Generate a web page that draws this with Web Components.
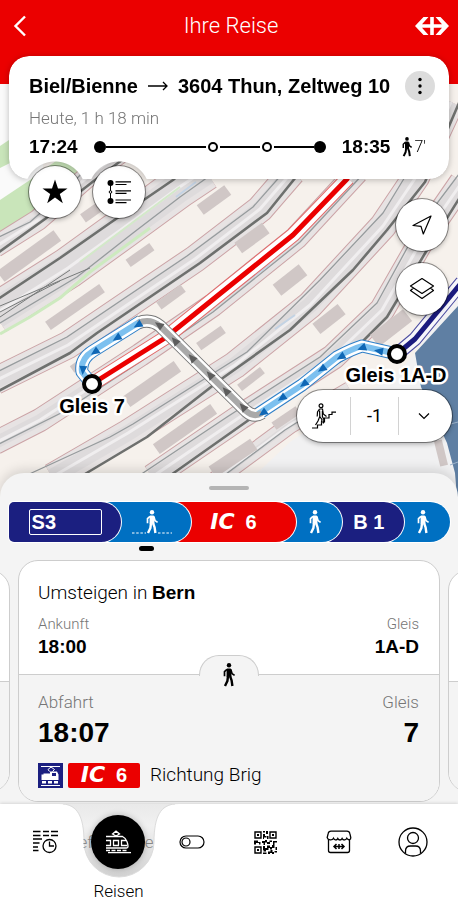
<!DOCTYPE html>
<html lang="de">
<head>
<meta charset="utf-8">
<meta name="viewport" content="width=device-width, initial-scale=1">
<title>Ihre Reise</title>
<style>
  body {
    margin: 0;
    background: #f4f4f4;
    color: #000;
    font-family: "Liberation Sans", Arial, sans-serif;
    --light-font: Roboto, "Liberation Sans", sans-serif;
    --red: #eb0000;
    --blue: #0070c2;
    --navy: #1b1f80;
    --grey: #767676;
    --panel: #f4f4f4;
    --line: #cdcdcd;
  }
</style>
</head>
<body>
<trip-screen></trip-screen>

<script>
const WALKER = `
  <circle cx="7" cy="2.3" r="2.2"/>
  <path d="M5 5.4h3.6l.8 1.4v7H4.6v-7z"/>
  <path fill="none" stroke="currentColor" stroke-width="1.7" stroke-linejoin="round" d="M5 6.3 2.5 8.6v4.6M8.8 6.6l1.2 4 2.6 1.8"/>
  <path fill="none" stroke="currentColor" stroke-width="2.4" stroke-linejoin="round" d="M6 13 5.4 18 3 23M8 13l1.6 4.4.8 5.6"/>`

const ICONS = {
  back: ['0 0 14 22', '<path fill="none" stroke="currentColor" stroke-width="2.4" d="M12 1.5 2.5 11 12 20.5"/>'],
  sbb: ['0 0 34 18', '<path d="M0 9 8.500 0h5L7 7.200h8.200V0h3.600v7.200H27L20.500 0h5L34 9l-8.500 9h-5l6.500-7.200h-8.200V18h-3.600v-7.200H7l6.500 7.200h-5z"/>'],
  arrow: ['0 0 20 10', '<path fill="none" stroke="currentColor" stroke-width="1.300" d="M0 5h19M15 1l4 4-4 4"/>'],
  dots: ['0 0 6 18', '<circle cx="3" cy="2.500" r="1.700"/><circle cx="3" cy="9" r="1.700"/><circle cx="3" cy="15.500" r="1.700"/>'],
  star: ['0 0 26 26', '<path d="m13 .5 3 9h9.500l-7.700 5.600 3 9.200-7.800-5.700-7.800 5.700 3-9.200L.5 9.500H10z"/>'],
  stops: ['0 0 24 24', `<g fill="none" stroke="currentColor"><path d="M3.500 3v18"/><path stroke-width="1.200" d="M8.500 1.800h16M8.500 4.500h11M8.500 10.800h16M8.500 13.300h11M8.500 20h16M8.500 22.600h11"/><circle cx="3.500" cy="12" r="1.300" fill="#fff"/></g><circle cx="3.500" cy="3" r="3"/><circle cx="3.500" cy="21" r="3"/>`],
  locate: ['0 0 20 20', '<path fill="none" stroke="currentColor" stroke-width="1.200" stroke-linejoin="round" d="M19 1 1 10.500l8 .8 2.300 7.700z"/>'],
  layers: ['0 0 26 24', '<path fill="none" stroke="currentColor" stroke-width="1.200" stroke-linejoin="round" d="M13 1.500 1.500 9 13 16.500 24.500 9zM4.500 11l-3 2.500L13 21.500l11.500-8-3-2.500"/>'],
  stairs: ['0 0 26 26', `<g fill="none" stroke="currentColor" stroke-width="1.200"><circle cx="10" cy="2.700" r="1.900"/><path d="M8.500 6h3l.8 5 3.200 2.500M8.500 6 6.500 9l-.3 4.500M8.600 7.500l.2 6L7 18l-2.500 4M11.400 8v5.500l1.500 3-.5 4M8.800 13.500l2.200 3.200-.6 2.600M1 25h5.500v-3h4v-3h3v-4h4.500v-3.500h3V9.200H25"/></g>`],
  down: ['0 0 12 8', '<path fill="none" stroke="currentColor" stroke-width="1.200" d="m1 1.500 5 5 5-5"/>'],
  walker: ['0 0 14 24', WALKER],
  platform: ['0 0 40 24', `<g transform="translate(13)">${WALKER}</g><path stroke="currentColor" stroke-width="1.200" stroke-dasharray="2.500 1.700" d="M0 23h14M26 23h14"/>`],
  train: ['0 0 25 25', `<path fill="#1b1f80" d="M0 0h25v25H0z"/><g stroke="#fff" fill="none"><path d="M3 3.500h19M10 6.500 13 4l3.500 2.500-2 2M10 6.500l1.500 2M3 22.500h19"/></g><path fill="#fff" d="M12 8.500h7l1.500 3V17h-17v-5.500h2v-1h6.500z"/><path fill="#1b1f80" d="M14 10h4v3h-4z"/><path fill="#fff" d="M4 18h4v2.500H4zM10 18h4v2.500h-4zM16 18h4v2.500h-4z"/>`],
  timetable: ['0 0 26 24', `<g fill="none" stroke="currentColor" stroke-width="1.300"><path d="M1 1.500h7.500M11 1.500h6M19 1.500h7M1 5.500h7.500M11 5.500h6M19 5.500h7M1 9h9M1 13h6.500M1 17h5M1 20.500h5.500"/><circle cx="17.500" cy="16" r="6.500"/><path d="M17.500 11.500V16h4.500"/></g>`],
  trips: ['0 0 26 24', `<g fill="none" stroke="currentColor" stroke-width="1.300"><path d="M1 6.500h16.500c4.500 2 5.500 8 5.500 10 0 1-.7 1.500-1.500 1.500H1"/><path d="M7.500 4 11 1.200 14.500 4 11 6z"/><path d="M1 10.500h4.500v5H1M8.500 10.500h5v5h-5zM21 10.500h-4.500v5h5.500"/><path stroke-dasharray="4 1.500" d="M1 20.500h22"/><path d="M3 22.600h23"/></g>`],
  toggle: ['0 0 26 14', '<g fill="none" stroke="currentColor" stroke-width="1.200"><rect x="1" y="1" width="24" height="12" rx="6"/><circle cx="7" cy="7" r="4"/></g>'],
  qr: ['0 0 23 23', `<g fill="none" stroke="currentColor" stroke-width="1.400"><path d="M1 1h6v6H1zM16 1h6v6h-6zM1 16h6v6H1z"/></g><path d="M3 3h2v2H3zM18 3h2v2h-2zM3 18h2v2H3zM9 0h2v1.500H9zM12 0h2v3h-2zM9 3h2v2h1.500v1.500H10V8H9zM13 5h1.500v3H13zM0 9.500h4V11h2.500v2.500H5V12H2v1.500H0zM8 10h3V9h2v2h2.500V9.500H18V11h-2v2h-3v-1.500h-2V14H9.500v-2H8zM19 10h4v1.500h-2.500V14H19zM9 15h2v2h2v-2.500h3V16h2v-2h2.500v3H18v1.500h-2V17h-1.500v2H12v1.500H9.500V19H9zM21.500 16H23v3h-1.500zM9 21.500h3.500V23H9zM14 20.500h2.500V19h2v2H20v2h-2v-1h-2v1h-2zM20.500 20H23v1.500h-2.500z"/>`],
  shop: ['0 0 26 24', `<g fill="none" stroke="currentColor" stroke-width="1.300"><path d="M5 1.200h16c1.500 0 2.500.8 2.800 2.200l1 4.200c.2 2.500-2.800 2.900-4 .7-1 2.200-3.700 2.200-4.700.2-1 2-3.300 2-4.300 0-1 2-3.300 2-4.300-.2-1 2.200-5.700 2.200-6.300-.7l1-4.200C2.500 2 3.500 1.200 5 1.200z"/><path d="M2.500 10v10.500c0 1.300.7 2 2 2h17c1.300 0 2-.7 2-2V10"/><path d="M8.500 16.500h9M13 14v5M10.500 14 8 16.500l2.500 2.500M15.500 14l2.500 2.500-2.500 2.500" stroke-width="1.500"/></g>`],
  person: ['0 0 30 30', '<g fill="none" stroke="currentColor" stroke-width="1.300"><circle cx="15" cy="15" r="14"/><circle cx="15" cy="11" r="5.500"/><path d="M7.500 26.500V24c0-3 2-5 5-5h5c3 0 5 2 5 5v2.500"/></g>']
}

// base class: every component only gives its template and its styles
class BaseElement extends HTMLElement {
  constructor() {
    super()
    this.attachShadow({ mode: 'open' })
  }
  connectedCallback() {
    const template = document.createElement('template')
    template.innerHTML = `<style>* { box-sizing: border-box; }
      button { font: inherit; color: inherit; border: 0; padding: 0; background: none; cursor: pointer; }
      ${this.getStyles()}</style>${this.getTemplate()}`
    this.shadowRoot.replaceChildren(template.content.cloneNode(true))
  }
}

class UiIcon extends BaseElement {
  getTemplate() {
    const [box, shape] = ICONS[this.getAttribute('name')]
    const [, , w, h] = box.split(' ')
    return `<svg viewBox="${box}" width="${this.getAttribute('width') || w}" height="${this.getAttribute('height') || h}" fill="currentColor" aria-hidden="true">${shape}</svg>`
  }
  getStyles() {
    return `
    :host { display: inline-flex; flex: none; }
    svg { display: block; }`
  }
}
customElements.define('ui-icon', UiIcon)

class AppHeader extends BaseElement {
  getTemplate() {
    return `
    <button aria-label="Zurück"><ui-icon name="back"></ui-icon></button>
    <h1><slot></slot></h1>
    <ui-icon name="sbb"></ui-icon>`
  }
  getStyles() {
    return `
    :host {
      display: grid;
      grid-template-columns: 34px 1fr 34px;
      align-items: center;
      height: 52px;
      padding: 0 9px 0 13px;
      margin-bottom: 32px;
      color: #fff;
      background: var(--red);
      box-shadow: 0 32px 0 var(--red);
    }
    button { display: flex; }
    h1 { margin: 0; font: 300 22px/28px var(--light-font); text-align: center; }`
  }
}
customElements.define('app-header', AppHeader)

class TripCard extends BaseElement {
  getTemplate() {
    return `
    <article>
      <div class="route">
        <b>Biel/Bienne</b><ui-icon name="arrow"></ui-icon><b>3604 Thun, Zeltweg 10</b>
        <button aria-label="Mehr"><ui-icon name="dots"></ui-icon></button>
      </div>
      <p>Heute, 1 h 18 min</p>
      <div class="times">
        <b>17:24</b>
        <div class="bar">
          <i class="end"></i><i class="leg long"></i><i class="stop"></i><i class="leg"></i><i class="stop"></i><i class="leg"></i><i class="end"></i>
        </div>
        <b>18:35</b>
        <span><ui-icon name="walker" width="12" height="20"></ui-icon>7'</span>
      </div>
    </article>`
  }
  getStyles() {
    return `
    :host { display: block; filter: drop-shadow(0 1px 3px rgba(0,0,0,.25)); }
    article {
      display: flex;
      flex-direction: column;
      gap: 5px;
      padding: 15px 14px 20px 20px;
      border-radius: 20px;
      background: #fff;
      --a: radial-gradient(circle at 46px calc(100% + 13px), transparent 30px, #000 31px);
      --b: radial-gradient(circle at 110px calc(100% + 13px), transparent 30px, #000 31px);
      mask-image: var(--a), var(--b);
      mask-composite: intersect;
    }
    .route { display: flex; align-items: center; gap: 10px; font-size: 20px; line-height: 24px; }
    .route b { white-space: nowrap; }
    button {
      display: flex; align-items: center; justify-content: center;
      width: 30px; height: 30px; margin-left: auto; border-radius: 50%; background: #dcdcdc;
    }
    p { margin: 0; color: var(--grey); font: 300 17px/24px var(--light-font); }
    .times { display: flex; align-items: center; gap: 16px; margin-right: 9px; font-size: 19px; line-height: 24px; }
    .bar { display: flex; align-items: center; flex: 1; }
    .end { width: 12px; height: 12px; border-radius: 50%; background: #000; }
    .stop { width: 10px; height: 10px; margin: 0 2px; border: 2px solid #000; border-radius: 50%; }
    .leg { flex: 40; height: 2px; background: #000; }
    .long { flex: 100; }
    span { display: flex; align-items: center; gap: 1px; margin-left: -5px; font: 300 16px/24px var(--light-font); }`
  }
}
customElements.define('trip-card', TripCard)

class RoundButton extends BaseElement {
  getTemplate() {
    return `<button aria-label="${this.getAttribute('label')}"><slot></slot></button>`
  }
  getStyles() {
    return `
    :host { display: block; }
    button {
      display: flex; align-items: center; justify-content: center;
      width: 52px; height: 52px; border-radius: 50%; background: #fff;
      box-shadow: 0 0 0 1px rgba(0,0,0,.4), 0 2px 5px rgba(0,0,0,.3);
    }`
  }
}
customElements.define('round-button', RoundButton)

class LevelPicker extends BaseElement {
  getTemplate() {
    return `
    <button aria-label="Treppe"><ui-icon name="stairs"></ui-icon></button>
    <output>-1</output>
    <button aria-label="Ebene wechseln"><ui-icon name="down"></ui-icon></button>`
  }
  getStyles() {
    return `
    :host {
      display: grid;
      grid-template-columns: 53px 49px 53px;
      height: 52px;
      padding: 7px 0;
      box-sizing: border-box;
      border-radius: 26px;
      background: #fff;
      box-shadow: 0 0 0 1px rgba(0,0,0,.4), 0 2px 5px rgba(0,0,0,.3);
    }
    button, output { display: flex; align-items: center; justify-content: center; }
    button:first-child { padding-left: 5px; }
    button:last-child { padding-right: 4px; }
    output { border: solid #d2d2d2; border-width: 0 1px; font: 18px/24px var(--light-font); }`
  }
}
customElements.define('level-picker', LevelPicker)

// tracks: thin upper rail, thick lower rail and the bed between them
const TRACKS = [
  { thin: 'M-5 239 30 222 60 196 85 170 110 150', thick: 'M-5 255 45 219 95 180 122 160', bed: 'M-5 247 38 220 85 179 120 153', width: 22 },
  { thin: 'M-5 326 77 277 133 233 180 197 215 172', thick: 'M-5 301 60 258 110 223 173 180 190 165', bed: 'M-5 314 68 268 122 229 178 188 205 170', width: 42 },
  { thin: 'M-5 373 67 337 187 256 253 207 283 173', thick: 'M-5 393 70 353 97 333 200 263 267 213 300 172', bed: 'M-5 381 68 345 195 259 260 209 292 172', width: 28 },
  { thin: 'M-5 446 63 412 140 362 213 312 300 242 365 172', thick: '', bed: 'M-5 443 40 420 140 355 213 305 296 238 357 172', width: 24 },
  { thin: 'M25 476 110 437 133 424 247 352 320 280 383 213 408 172 440 110', thick: 'M80 477 147 437 220 380 290 330 353 270 387 230 425 182 462 96', bed: 'M52 477 128 433 235 365 310 305 383 226 416 177 451 102', width: 28 },
  { thin: 'M140 475 227 417 320 357 377 303 417 230 462 170', thick: 'M168 477 253 417 347 357 387 317 427 250 462 194', bed: 'M152 477 240 417 333 357 382 310 422 240 462 182', width: 26 },
  { thin: 'M218 480 285 430 345 392', thick: '', bed: 'M210 484 290 425 350 390', width: 18 }
]

// centre x, centre y, width, height, angle
const BUILDINGS = [
  [29, 256, 70, 13, -36], [75, 307, 66, 10, -35], [92, 212, 22, 10, -35], [140, 255, 29, 9, -35],
  [214, 200, 34, 12, -36], [171, 297, 30, 9, -36], [252, 238, 34, 13, -36], [290, 280, 33, 14, -38],
  [329, 319, 32, 13, -38], [391, 328, 42, 15, -38], [211, 338, 30, 9, -35], [152, 384, 62, 13, -35],
  [185, 429, 70, 12, -35], [251, 379, 29, 8, -38], [233, 458, 50, 13, -34], [286, 418, 29, 9, -34],
  [77, 366, 12, 8, -35], [441, 453, 8, 26, -14]
]

const ARROWS = [
  ['b', 379, 351, 190], ['b', 362, 348, 160], ['b', 341, 357, 150], ['b', 322, 369, 145], ['b', 304, 384, 142],
  ['b', 282, 398, 145], ['b', 263, 413, 145], ['g', 243, 407, 228], ['g', 226, 391, 228], ['g', 210, 375, 228],
  ['g', 192, 358, 228], ['g', 175, 341, 228], ['g', 159, 325, 215], ['b', 138, 325, 150], ['b', 117, 338, 148],
  ['b', 95, 352, 145], ['b', 83, 370, 95]
]

const WALK_BLUE = 'M397 354 362 346Q352 349 337 357L302 385 258 414M141 321 93 351Q80 359 82 372L90 382'
const WALK_GREY = 'M262 413Q254 418 246 411L160 326Q150 318 138 323'

class TripMap extends BaseElement {
  getTemplate() {
    const tracks = TRACKS.map(t => `
      <path d="${t.bed}" stroke="#cba3a6" stroke-width="${t.width}"/>
      <path d="${t.bed}" stroke="#e7e3e3" stroke-width="${t.width - 2}"/>
      <path d="${t.bed}" stroke="#dedbdc" stroke-width="${t.width - 12}"/>
      <path d="${t.bed}" stroke="#f0eeef" stroke-width="3"/>
      <path d="${t.thin}" stroke="#969b9d" stroke-width="1.300"/>
      <path d="${t.thick}" stroke="#6e706e" stroke-width="2.600"/>`).join('')
    const buildings = BUILDINGS.map(([x, y, w, h, a]) =>
      `<rect x="${-w / 2}" y="${-h / 2}" width="${w}" height="${h}" transform="translate(${x} ${y}) rotate(${a})"/>`).join('')
    const arrows = ARROWS.map(([c, x, y, a]) =>
      `<path fill="${c === 'b' ? '#0f67b5' : '#5d5d5d'}" d="M5 0-4-4V4z" transform="translate(${x} ${y}) rotate(${a})"/>`).join('')
    return `
    <svg viewBox="0 84 458 413" preserveAspectRatio="xMidYMin slice" role="img" aria-label="Karte">
      <path fill="#f6f1ec" d="M0 84h458v413H0z"/>
      <path fill="#fafafa" d="M0 84h60L40 180 0 215z"/>
      <path fill="#c9e5ba" d="M0 146l12-8v24L0 168zM0 200l30-20 30-22 24 8-34 40-50 30z"/>
      <path fill="#f1f1f2" d="M232 497 290 442 350 402 396 375 416 352 458 290V497z"/>
      <g fill="none" stroke-linejoin="round">
        ${tracks}
        <path stroke="#777a7a" stroke-width="1" d="M0 306 45 287 90 268M0 312 60 281M0 317 70 270"/>
        <path stroke="#cdeabf" stroke-width="3" d="M0 334 30 317 60 298 90 272 150 228"/>
        <path stroke="#d3e9c9" stroke-width="2" d="M80 262 180 187"/>
        <path stroke="#c3d3e4" stroke-width="2" d="M176 197 196 182M240 286 270 264M275 329 295 315"/>
      </g>
      <path fill="#5f7fa3" d="M415 353 458 306V497h-1l-2-24-8-30-26-56z"/>
      <path fill="none" stroke="#9fb4cb" d="m447 425 11-3M450 465l8-3"/>
      <g fill="#d0c7c6">${buildings}</g>
      <g fill="none" stroke-linejoin="round">
        <path stroke="#e46a6a" stroke-width="15" d="M92 384 165 338 293 235 348 178"/>
        <path stroke="#fff" stroke-width="13" d="M92 384 165 338 293 235 348 178"/>
        <path stroke="#eb0000" stroke-width="5" d="M92 384 165 338 293 235 348 178"/>
        <path stroke="#4c4ca0" stroke-width="14" d="M397 354 415 339 462 282"/>
        <path stroke="#f7f7fb" stroke-width="12" d="M397 354 415 339 462 282"/>
        <path stroke="#1b1b7f" stroke-width="5" d="M397 354 415 339 462 282"/>
        <path stroke="#2d7fc8" stroke-width="13" d="${WALK_BLUE}"/>
        <path stroke="#777" stroke-width="13" d="${WALK_GREY}"/>
        <path stroke="#fff" stroke-width="11" d="${WALK_BLUE}${WALK_GREY}"/>
        <path stroke="#7cc0ef" stroke-width="6" d="${WALK_BLUE}"/>
        <path stroke="#a9a9a9" stroke-width="6" d="${WALK_GREY}"/>
      </g>
      ${arrows}
      <g fill="#fff" stroke="#000" stroke-width="4"><circle cx="92" cy="384" r="8"/><circle cx="397" cy="354" r="8"/></g>
      <g class="labels"><text x="92" y="413">Gleis 7</text><text x="396" y="382">Gleis 1A-D</text></g>
    </svg>
    <div class="over">
      <trip-card></trip-card>
      <div class="tools">
        <div class="row">
          <round-button label="Favorit"><ui-icon name="star"></ui-icon></round-button>
          <round-button label="Halte"><ui-icon name="stops"></ui-icon></round-button>
        </div>
        <div class="column">
          <round-button label="Standort"><ui-icon name="locate"></ui-icon></round-button>
          <round-button label="Kartenebenen"><ui-icon name="layers"></ui-icon></round-button>
        </div>
      </div>
      <level-picker></level-picker>
    </div>`
  }
  getStyles() {
    return `
    :host { display: flex; position: relative; }
    svg { position: absolute; inset: 0; width: 100%; height: 100%; }
    .labels { font: bold 20px "Liberation Sans", Arial, sans-serif; text-anchor: middle; paint-order: stroke; stroke: #fff; stroke-width: 5px; stroke-linejoin: round; }
    .over { position: relative; display: flex; flex-direction: column; flex: 1; margin-top: -28px; padding: 0 9px 55px; }
    .tools { display: flex; justify-content: space-between; align-items: flex-start; padding: 0 1px 24px 20px; }
    .row { display: flex; gap: 12px; margin-top: -13px; }
    .column { display: grid; gap: 12px; margin-top: 20px; }
    level-picker { align-self: flex-end; margin-top: auto; margin-right: -3px; }`
  }
}
customElements.define('trip-map', TripMap)

class LineBadge extends BaseElement {
  getTemplate() {
    return `<em>IC</em><b>6</b>`
  }
  getStyles() {
    return `
    :host { display: inline-flex; align-items: center; gap: 11px; color: #fff; }
    em { font: italic bold 22px/24px "DejaVu Sans", sans-serif; }
    b { font: bold 20px/24px "Liberation Sans", Arial, sans-serif; }`
  }
}
customElements.define('line-badge', LineBadge)

class LegStrip extends BaseElement {
  getTemplate() {
    return `
    <button class="navy s" aria-label="S3"><span>S3</span></button>
    <button class="blue platform" aria-label="Umsteigen"><ui-icon name="platform"></ui-icon></button>
    <button class="red ic" aria-label="IC 6"><line-badge></line-badge></button>
    <button class="blue walk" aria-label="Fussweg"><ui-icon name="walker"></ui-icon></button>
    <button class="navy bus">B 1</button>
    <button class="blue walk" aria-label="Fussweg"><ui-icon name="walker"></ui-icon></button>`
  }
  getStyles() {
    return `
    :host { display: flex; height: 40px; isolation: isolate; }
    button {
      position: relative;
      display: flex; align-items: center; justify-content: center;
      flex: var(--w) var(--w) calc(var(--w) * 1px);
      margin-left: -20px; padding-left: 12px;
      border-radius: 0 20px 20px 0;
      box-shadow: 0 0 0 1px #fff;
      color: #fff; font-size: 20px; font-weight: bold; line-height: 24px;
    }
    .navy { background: var(--navy); }
    .blue { background: var(--blue); }
    .red { background: var(--red); }
    .s { --w: 112; margin: 0; padding: 0; border-radius: 5px 20px 20px 5px; z-index: 6; }
    .s span { width: 73px; padding-left: 2px; border: 1px solid #fff; border-radius: 2px; text-align: left; }
    .platform { --w: 90; z-index: 5; }
    .platform::after {
      content: ""; position: absolute; top: 44px; left: calc(50% - 7px);
      width: 15px; height: 5px; border-radius: 3px; background: #000;
    }
    .ic { --w: 124; padding: 0; z-index: 4; }
    .walk { --w: 66; z-index: 1; }
    .walk:not(:last-child) { z-index: 3; }
    .bus { --w: 82; z-index: 2; }`
  }
}
customElements.define('leg-strip', LegStrip)

class TransferCard extends BaseElement {
  getTemplate() {
    return `
    <section class="arrive"><slot name="arrive"></slot></section>
    <section class="depart"><slot name="tab"></slot><slot name="depart"></slot></section>`
  }
  getStyles() {
    return `
    :host {
      display: flex; flex-direction: column; overflow: hidden; box-sizing: border-box;
      border: 1px solid var(--line); border-radius: 20px; background: #fff;
    }
    .arrive { min-height: 110px; }
    .depart { position: relative; flex: 1; border-top: 1px solid var(--line); background: var(--panel); }`
  }
}
customElements.define('transfer-card', TransferCard)

class TripSheet extends BaseElement {
  getTemplate() {
    return `
    <i class="handle"></i>
    <leg-strip></leg-strip>
    <div class="carousel">
      <transfer-card aria-hidden="true"></transfer-card>
      <transfer-card class="current">
        <div slot="arrive" class="top">
          <h2>Umsteigen in <b>Bern</b></h2>
          <dl>
            <div><dt>Ankunft</dt><dd>18:00</dd></div>
            <div><dt>Gleis</dt><dd>1A-D</dd></div>
          </dl>
        </div>
        <div slot="tab" class="tab"><ui-icon name="walker"></ui-icon></div>
        <div slot="depart" class="bottom">
          <dl>
            <div><dt>Abfahrt</dt><dd>18:07</dd></div>
            <div><dt>Gleis</dt><dd>7</dd></div>
          </dl>
          <p><ui-icon name="train"></ui-icon><line-badge></line-badge><span>Richtung Brig</span></p>
        </div>
      </transfer-card>
      <transfer-card aria-hidden="true"></transfer-card>
    </div>`
  }
  getStyles() {
    return `
    :host {
      position: relative; display: block; margin-top: -24px; padding-top: 13px;
      border-radius: 24px 24px 0 0; background: var(--panel);
      box-shadow: 0 -3px 12px rgba(0,0,0,.14);
    }
    .handle { display: block; width: 40px; height: 4px; margin: 0 auto 12px; border-radius: 2px; background: #b4b4b4; }
    leg-strip { margin: 0 8px 18px 9px; }
    .carousel { display: flex; justify-content: center; align-items: center; gap: 8px; overflow: hidden; padding-bottom: 2px; }
    transfer-card { flex: none; width: calc(100% - 36px); height: 222px; }
    .current { height: auto; }
    .top { padding: 19px 20px 14px 19px; }
    h2 { margin: 0 0 8px; font: 300 19px/26px var(--light-font); }
    h2 b { font: bold 19px/26px "Liberation Sans", Arial, sans-serif; }
    dl { display: flex; justify-content: space-between; margin: 0; }
    dl div:last-child { text-align: right; }
    dt { color: var(--grey); font: 300 15px/20px var(--light-font); }
    dd { margin: 0; font-weight: bold; font-size: 19px; line-height: 26px; }
    .tab {
      position: absolute; top: -20px; left: calc(50% - 30px);
      display: flex; justify-content: center; width: 60px; height: 30px; padding-top: 7px;
      border: 1px solid var(--line); border-width: 1px 1px 0; border-radius: 20px 20px 0 0; background: var(--panel);
      clip-path: inset(0 0 -12px);
    }
    .tab::after { content: ""; position: absolute; inset: 20px -1px -2px; background: var(--panel); }
    .tab ui-icon { position: relative; z-index: 1; }
    .bottom { padding: 16px 20px 13px 19px; }
    .bottom dt { font-size: 17px; line-height: 22px; }
    .bottom dd { font-size: 28px; line-height: 40px; }
    p { display: flex; align-items: center; margin: 9px 0 0; font: 300 19px/26px var(--light-font); }
    p line-badge { justify-content: center; width: 72px; height: 25px; margin: 0 10px 0 5px; border-radius: 2px; background: var(--red); }`
  }
}
customElements.define('trip-sheet', TripSheet)

class BottomNav extends BaseElement {
  getTemplate() {
    return `
    <nav>
      <a href="#fahrplan" aria-label="Fahrplan"><ui-icon name="timetable"></ui-icon></a>
      <a href="#reisen" class="active">
        <svg class="notch" viewBox="0 0 120 74" width="120" height="74" aria-hidden="true">
          <defs><linearGradient id="g" x1="0" y1="0" x2="0" y2="1">
            <stop offset="0" stop-color="#e9e9e9"/><stop offset=".3" stop-color="#f1f1f1"/><stop offset="1" stop-color="#d2d2d2"/>
          </linearGradient></defs>
          <path fill="url(#g)" d="M0 0C18 0 25 12 25 38a35 35 0 0 0 70 0C95 12 102 0 120 0z"/>
          <path fill="none" stroke="#dcdcdc" d="M4 0C18 1 25 12 25 38a35 35 0 0 0 70 0C95 12 102 1 116 0"/>
        </svg>
        <span class="behind"><i>ef</i><i>e</i></span>
        <span class="disc"><ui-icon name="trips"></ui-icon></span>
        <span class="label">Reisen</span>
      </a>
      <a href="#easyride" aria-label="EasyRide"><ui-icon name="toggle"></ui-icon></a>
      <a href="#billette" aria-label="Billette"><ui-icon name="qr"></ui-icon></a>
      <a href="#shop" aria-label="Shop"><ui-icon name="shop"></ui-icon></a>
      <a href="#profil" aria-label="Profil"><ui-icon name="person"></ui-icon></a>
    </nav>`
  }
  getStyles() {
    return `
    :host { display: block; position: relative; background: #fff; box-shadow: 0 -1px 3px rgba(0,0,0,.12); }
    nav { display: grid; grid-template-columns: repeat(6, 1fr); height: 102px; padding: 11px 8px 5px; }
    a { position: relative; display: flex; flex-direction: column; align-items: center; color: #000; text-decoration: none; }
    a > ui-icon { height: 54px; align-items: center; }
    .notch { position: absolute; top: -11px; left: calc(50% - 60px); }
    .behind { position: absolute; top: 15px; left: calc(50% - 40px); display: flex; justify-content: space-between; width: 75px; color: #8a8a8a; font: 300 17px/24px var(--light-font); clip-path: inset(0 0 0 5px); }
    .behind i { font-style: normal; }
    .disc { position: relative; display: flex; align-items: center; justify-content: center; width: 54px; height: 54px; border-radius: 50%; color: #fff; background: #000; box-shadow: 0 0 6px rgba(0,0,0,.25); }
    .label { margin-top: 11px; font: 300 17px/22px var(--light-font); }`
  }
}
customElements.define('bottom-nav', BottomNav)

class TripScreen extends BaseElement {
  getTemplate() {
    return `
    <app-header>Ihre Reise</app-header>
    <trip-map></trip-map>
    <trip-sheet></trip-sheet>
    <bottom-nav></bottom-nav>`
  }
  getStyles() {
    return `
    :host { display: flex; flex-direction: column; min-height: 100vh; }
    trip-map { flex: 1; }`
  }
}
customElements.define('trip-screen', TripScreen)
</script>
</body>
</html>
